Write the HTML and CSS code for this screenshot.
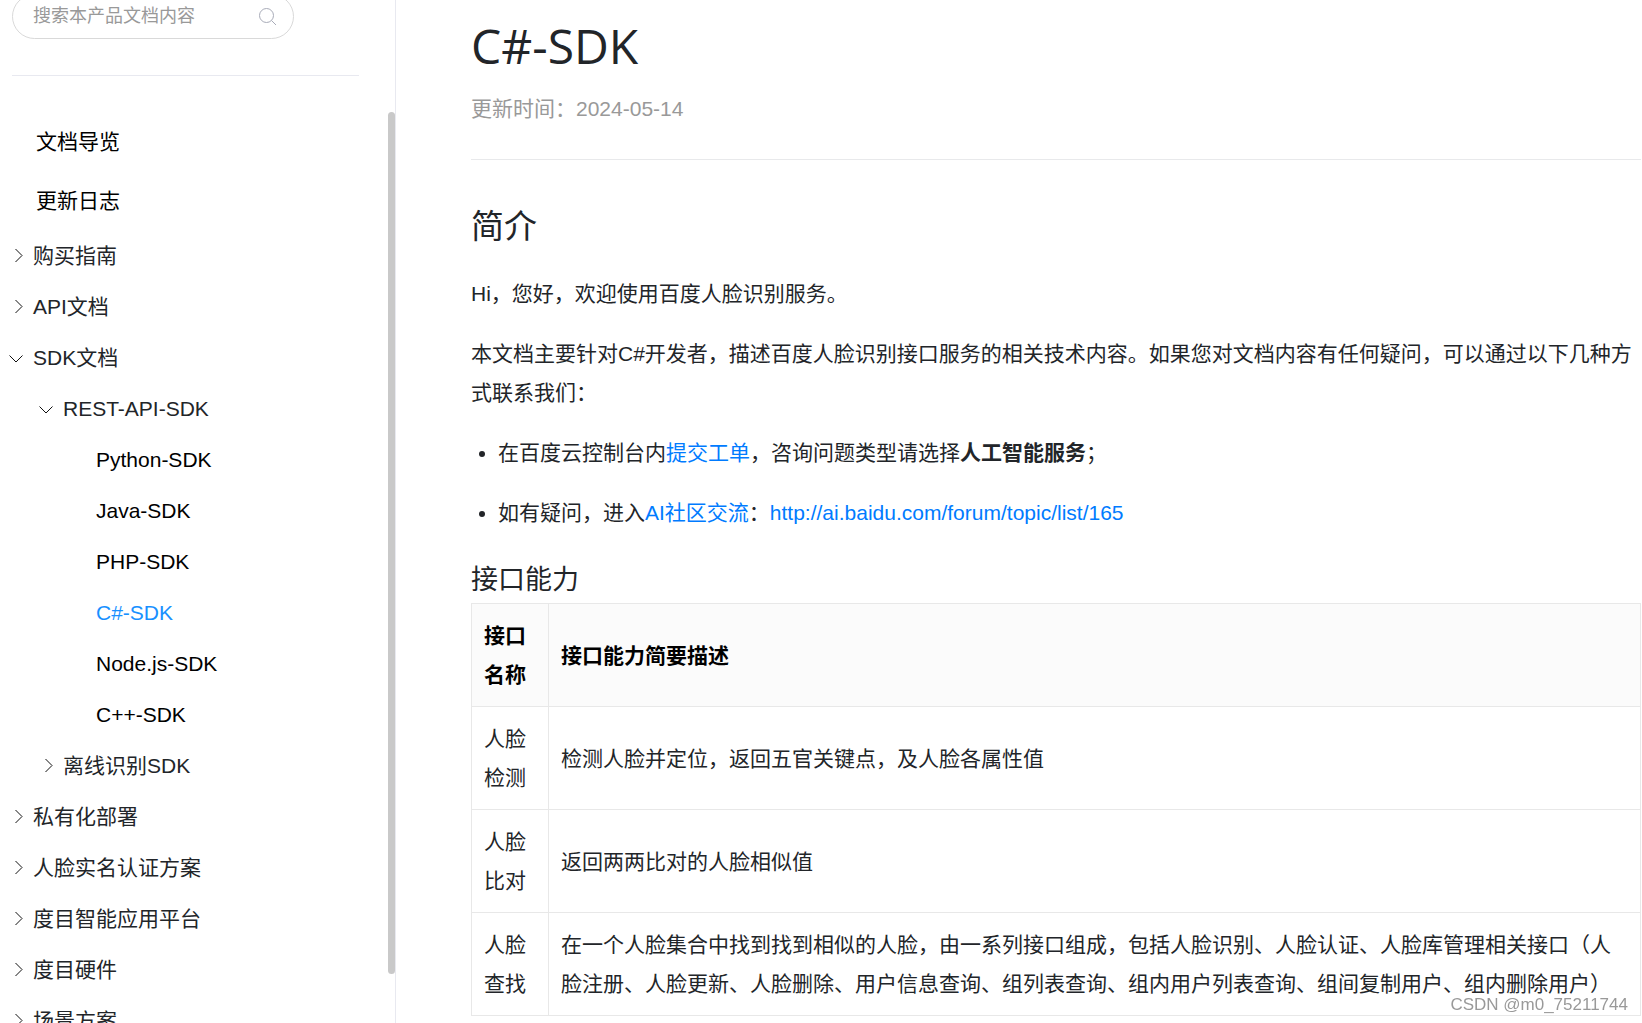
FILE: index.html
```html
<!DOCTYPE html>
<html lang="zh-CN">

<head>
  <meta charset="UTF-8">
  <title>C#-SDK - 人脸识别</title>
  <meta name="viewport" content="width=device-width, initial-scale=1">
  <link rel="stylesheet" href="styles.css">
</head>

<body>
  <svg class="sprite" aria-hidden="true">
    <symbol id="right" viewBox="0 0 14 14">
      <path d="M6.500 0L13 6.500L6.500 13" />
    </symbol>
    <symbol id="down" viewBox="0 0 14 14">
      <path d="M0.500 4.500L7 11L13.500 4.500" />
    </symbol>
  </svg>

  <div class="layout">

    <!-- Sidebar -->
    <aside class="sidebar">
      <form class="search">
        <input type="text" aria-label="搜索" placeholder="搜索本产品文档内容">
        <button type="button" aria-label="搜索">
          <svg viewBox="0 0 18 18">
            <circle cx="7.500" cy="7.500" r="7" />
            <path d="M12.500 12.500L17 17" />
          </svg>
        </button>
      </form>

      <nav>
        <ul class="menu">
          <li><a class="top-link" href="#">文档导览</a></li>
          <li><a class="top-link" href="#">更新日志</a></li>
          <li><button><svg><use href="#right" /></svg>购买指南</button></li>
          <li><button><svg><use href="#right" /></svg>API文档</button></li>
          <li>
            <button><svg><use href="#down" /></svg>SDK文档</button>
            <ul>
              <li>
                <button><svg><use href="#down" /></svg>REST-API-SDK</button>
                <ul>
                  <li><a href="#">Python-SDK</a></li>
                  <li><a href="#">Java-SDK</a></li>
                  <li><a href="#">PHP-SDK</a></li>
                  <li><a class="current" href="#">C#-SDK</a></li>
                  <li><a href="#">Node.js-SDK</a></li>
                  <li><a href="#">C++-SDK</a></li>
                </ul>
              </li>
              <li><button><svg><use href="#right" /></svg>离线识别SDK</button></li>
            </ul>
          </li>
          <li><button><svg><use href="#right" /></svg>私有化部署</button></li>
          <li><button><svg><use href="#right" /></svg>人脸实名认证方案</button></li>
          <li><button><svg><use href="#right" /></svg>度目智能应用平台</button></li>
          <li><button><svg><use href="#right" /></svg>度目硬件</button></li>
          <li><button><svg><use href="#right" /></svg>场景方案</button></li>
        </ul>
      </nav>
      <div class="scroll-thumb"></div>
    </aside>

    <!-- Document -->
    <main class="content">
      <header>
        <h1>C#-SDK</h1>
        <p class="updated">更新时间：2024-05-14</p>
      </header>

      <h2>简介</h2>
      <p>Hi，您好，欢迎使用百度人脸识别服务。</p>
      <p>本文档主要针对C#开发者，描述百度人脸识别接口服务的相关技术内容。如果您对文档内容有任何疑问，可以通过以下几种方式联系我们：</p>
      <ul class="contact">
        <li>在百度云控制台内<a href="#">提交工单</a>，咨询问题类型请选择<strong>人工智能服务</strong>；</li>
        <li>如有疑问，进入<a href="#">AI社区交流</a>：<a href="#">http://ai.baidu.com/forum/topic/list/165</a></li>
      </ul>

      <h3>接口能力</h3>
      <table>
        <thead>
          <tr>
            <th class="name">接口名称</th>
            <th>接口能力简要描述</th>
          </tr>
        </thead>
        <tbody>
          <tr>
            <td>人脸检测</td>
            <td>检测人脸并定位，返回五官关键点，及人脸各属性值</td>
          </tr>
          <tr>
            <td>人脸比对</td>
            <td>返回两两比对的人脸相似值</td>
          </tr>
          <tr>
            <td>人脸查找</td>
            <td>在一个人脸集合中找到找到相似的人脸，由一系列接口组成，包括人脸识别、人脸认证、人脸库管理相关接口（人脸注册、人脸更新、人脸删除、用户信息查询、组列表查询、组内用户列表查询、组间复制用户、组内删除用户）</td>
          </tr>
        </tbody>
      </table>
    </main>

  </div>

  <div class="watermark">CSDN @m0_75211744</div>
</body>

</html>
```
FILE: styles.css
```css
* {
  box-sizing: border-box;
  margin: 0;
  padding: 0;
}

body {
  font-family: "Liberation Sans", "Noto Sans CJK SC", sans-serif;
  font-size: 21px;
  line-height: 39px;
  color: #222529;
  background: #fff;
  overflow: hidden;
}

a {
  color: #007bff;
  text-decoration: none;
}

.sprite {
  display: none;
}

.layout {
  display: flex;
  height: 100vh;
}

/* Sidebar */
.sidebar {
  position: relative;
  flex: 0 0 396px;
  padding: 0 36px 0 12px;
  border-right: 1px solid #e8e9f0;
  overflow: hidden;
}

/* search box is partly scrolled out of view */
.search {
  display: flex;
  align-items: center;
  width: 282px;
  height: 45px;
  margin-top: -6px;
  padding: 0 16px 0 20px;
  border: 1px solid #d9d9d9;
  border-radius: 23px;
}

.search input {
  flex: 1;
  min-width: 0;
  border: none;
  outline: none;
  font: inherit;
  font-size: 18px;
}

.search input::placeholder {
  color: #999;
}

.search button {
  display: flex;
  border: none;
  background: none;
}

.search svg {
  width: 18px;
  height: 18px;
  fill: none;
  stroke: #a8abb8;
}

nav {
  margin-top: 36px;
  padding-top: 36px;
  border-top: 1px solid #e8e9f0;
}

.menu,
.menu ul {
  list-style: none;
}

.menu a {
  display: block;
  line-height: 51px;
  color: #000;
}

.menu .top-link {
  padding-left: 24px;
  line-height: 59px;
}

.menu button {
  display: flex;
  align-items: center;
  gap: 10px;
  width: 100%;
  margin-left: -3px;
  border: none;
  background: none;
  font: inherit;
  line-height: 51px;
  color: #222529;
}

.menu svg {
  width: 14px;
  height: 14px;
  fill: none;
  stroke: #111;
}

.menu ul {
  padding-left: 30px;
}

.menu ul ul {
  padding-left: 54px;
}

.menu .current {
  color: #1890ff;
}

.scroll-thumb {
  position: absolute;
  top: 112px;
  right: 0;
  width: 7px;
  height: 862px;
  border-radius: 4px;
  background: #c9c9c9;
}

/* Document */
.content {
  flex: 1;
  min-width: 0;
  padding: 17px 1px 0 75px;
}

header {
  padding-bottom: 31px;
  border-bottom: 1px solid #e8e9eb;
}

h1 {
  font-family: "Open Sans", "Noto Sans CJK SC", sans-serif;
  font-size: 48px;
  font-weight: 400;
  line-height: 58px;
}

.content .updated {
  margin: 14px 0 0;
  color: #999;
}

h2 {
  margin: 42px 0 22px;
  font-size: 33px;
  font-weight: 400;
  line-height: 50px;
}

.content p {
  margin-bottom: 21px;
}

.contact {
  padding-left: 27px;
}

.contact li {
  margin-bottom: 21px;
}

h3 {
  margin: 30px 0 5px;
  font-size: 27px;
  font-weight: 400;
  line-height: 36px;
}

table {
  width: 100%;
  border-collapse: collapse;
}

th,
td {
  padding: 12px;
  border: 1px solid #e8e8e8;
  text-align: left;
}

th {
  background: #fbfbfb;
  color: #000;
}

.name {
  width: 77px;
}

.watermark {
  position: fixed;
  right: 14px;
  bottom: 8px;
  font-size: 17px;
  line-height: 20px;
  color: #999;
}
```
